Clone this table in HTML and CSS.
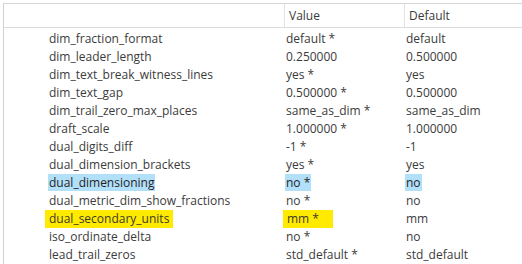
FILE: index.html
```html
<!DOCTYPE html>
<html>
<head>
<meta charset="utf-8">
<link rel="stylesheet" href="styles.css">
</head>
<body>
<div class="grid">
  <div class="head">
    <div class="c name"></div>
    <div class="c val sep">Value</div>
    <div class="c def sep">Default</div>
  </div>
  <div class="row"><div class="c name"><span>dim_fraction_format</span></div><div class="c val"><span>default *</span></div><div class="c def"><span>default</span></div></div>
  <div class="row"><div class="c name"><span>dim_leader_length</span></div><div class="c val"><span>0.250000</span></div><div class="c def"><span>0.500000</span></div></div>
  <div class="row"><div class="c name"><span>dim_text_break_witness_lines</span></div><div class="c val"><span>yes *</span></div><div class="c def"><span>yes</span></div></div>
  <div class="row"><div class="c name"><span>dim_text_gap</span></div><div class="c val"><span>0.500000 *</span></div><div class="c def"><span>0.500000</span></div></div>
  <div class="row"><div class="c name"><span>dim_trail_zero_max_places</span></div><div class="c val"><span>same_as_dim *</span></div><div class="c def"><span>same_as_dim</span></div></div>
  <div class="row"><div class="c name"><span>draft_scale</span></div><div class="c val"><span>1.000000 *</span></div><div class="c def"><span>1.000000</span></div></div>
  <div class="row"><div class="c name"><span>dual_digits_diff</span></div><div class="c val"><span>-1 *</span></div><div class="c def"><span>-1</span></div></div>
  <div class="row"><div class="c name"><span>dual_dimension_brackets</span></div><div class="c val"><span>yes *</span></div><div class="c def"><span>yes</span></div></div>
  <div class="row"><div class="c name"><span class="blue">dual_dimensioning</span></div><div class="c val"><span class="blue">no *</span></div><div class="c def"><span class="blue">no</span></div></div>
  <div class="row"><div class="c name"><span>dual_metric_dim_show_fractions</span></div><div class="c val"><span>no *</span></div><div class="c def"><span>no</span></div></div>
  <div class="row"><div class="c name"><span class="yellow yn">dual_secondary_units</span></div><div class="c val"><span class="yellow yv">mm *</span></div><div class="c def"><span>mm</span></div></div>
  <div class="row"><div class="c name"><span>iso_ordinate_delta</span></div><div class="c val"><span>no *</span></div><div class="c def"><span>no</span></div></div>
  <div class="row"><div class="c name"><span>lead_trail_zeros</span></div><div class="c val"><span>std_default *</span></div><div class="c def"><span>std_default</span></div></div>
</div>
</body>
</html>
```
FILE: styles.css
```css
html, body {
  margin: 0;
  padding: 0;
  background: #ffffff;
}
body {
  font-family: "Open Sans", "Noto Sans", sans-serif;
  font-size: 12px;
  color: #3b3b3b;
}
.grid {
  margin: 3px 0 0 3px;
  border-top: 1px solid #d6d6d6;
  border-left: 1px solid #d0d0d0;
  height: 262px;
  overflow: hidden;
}
.head {
  display: grid;
  grid-template-columns: 280px 120px 1fr;
  height: 23px;
  border-bottom: 1px solid #dcdcdc;
}
.head .c {
  display: flex;
  align-items: center;
}
.head .sep {
  border-left: 1px solid #e3e3e3;
  padding-left: 4px;
}
.row {
  display: grid;
  grid-template-columns: 280px 120px 1fr;
  height: 18px;
}
.row:first-of-type {
  margin-top: 1px;
}
.head + .row {
  margin-top: 1px;
}
.row .c {
  display: flex;
  align-items: center;
  white-space: nowrap;
}
.row .name {
  padding-left: 44px;
}
.row .val {
  padding-left: 1px;
}
.row .def {
  padding-left: 1px;
}
.c span {
  padding: 0 1px;
  line-height: 17px;
}
.blue {
  background: #b3e0f9;
  color: #1f1f1f;
}
.yellow {
  background: #ffea00;
  color: #3a3a2a;
  position: relative;
  top: 1px;
  line-height: 18px !important;
}
.yn {
  margin-left: -3px;
  padding: 0 4px !important;
}
.yv {
  margin-left: -2px;
  padding: 0 14px 0 4px !important;
}
```
